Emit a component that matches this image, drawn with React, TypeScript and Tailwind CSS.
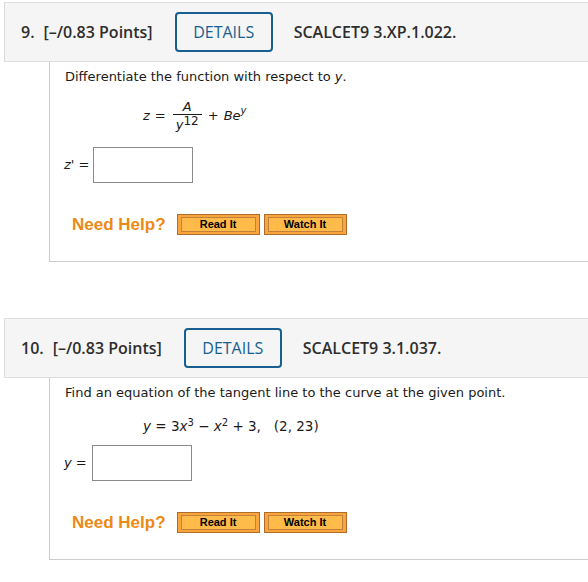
import React from "react";

const verdana = { fontFamily: '"DejaVu Sans", Verdana, sans-serif' };

function Header({ num, code, numGap }: { num: string; code: string; numGap: string }) {
  return (
    <div
      className="ml-[4px] h-[60px] box-border border border-r-0 border-[#dddddd] bg-[#f5f5f5] flex items-center pl-[16px] text-[16px] text-[#2e2e2e]"
      style={{ fontFamily: '"Open Sans", sans-serif' }}
    >
      <span className="font-semibold">{num}</span>
      <span className={`font-semibold ${numGap}`}>[–/0.83 Points]</span>
      <div className="ml-[22px] w-[98px] h-[40px] box-border border-2 border-[#175f91] rounded-[4px] flex items-center justify-center text-[#175f91] text-[16px]">
        DETAILS
      </div>
      <span className="ml-[21px] font-semibold">{code}</span>
    </div>
  );
}

function HelpRow({ mt }: { mt: string }) {
  const btn =
    "h-[21px] box-border border border-[#ad6c2a] bg-[#f9a43c] px-[3px] py-[2px] flex";
  const inner =
    "flex-1 box-border border border-[#c2803a] bg-[#ffbb4a] flex items-center justify-center text-[11px] font-bold text-black leading-none";
  return (
    <div className={`flex items-center ${mt} ml-[7px]`} style={{ fontFamily: '"Liberation Sans", Arial, sans-serif' }}>
      <span className="text-[17px] font-bold text-[#ec8a14] leading-[21px]">Need Help?</span>
      <div className={`${btn} ml-[11px] w-[83px]`}>
        <div className={inner}>Read It</div>
      </div>
      <div className={`${btn} ml-[4px] w-[83px]`}>
        <div className={inner}>Watch It</div>
      </div>
    </div>
  );
}

export default function App() {
  return (
    <div className="w-[588px] h-[582px] bg-white overflow-hidden pt-[2px] text-[#1a1a1a]">
      {/* Question 9 */}
      <Header num="9." code="SCALCET9 3.XP.1.022." numGap="ml-[9px]" />
      <div className="ml-[49px] h-[200px] box-border border-l border-b border-[#cccccc] pl-[15px] pt-[7px]" style={verdana}>
        <div className="text-[13px] leading-[16px]">
          Differentiate the function with respect to <i>y</i>.
        </div>
        <div className="mt-[14px] ml-[78px] flex items-center text-[13px]">
          <i>z</i>
          <span className="ml-[5px]">=</span>
          <div className="ml-[7px] flex flex-col items-center">
            <i className="leading-[15px] px-[2px]">A</i>
            <div className="w-[29px] h-px bg-[#1a1a1a]" />
            <div className="leading-[16px] pt-[2px] whitespace-nowrap">
              <i>y</i>
              <span className="text-[12px] relative top-[-4px] inline-block">12</span>
            </div>
          </div>
          <span className="ml-[6px]">+</span>
          <i className="ml-[5px]">Be</i>
          <i className="text-[10px] relative top-[-6px]">y</i>
        </div>
        <div className="mt-[14px] flex items-center text-[13px]">
          <span className="ml-[-1px]">
            <i>z</i>' =
          </span>
          <div className="ml-[4px] w-[100px] h-[36px] box-border border border-[#8a8a8a] bg-white" />
        </div>
        <HelpRow mt="mt-[31px]" />
      </div>

      <div className="h-[56px]" />

      {/* Question 10 */}
      <Header num="10." code="SCALCET9 3.1.037." numGap="ml-[9px]" />
      <div className="ml-[49px] h-[182px] box-border border-l border-b border-[#cccccc] pl-[15px] pt-[7px]" style={verdana}>
        <div className="text-[13px] leading-[16px]">
          Find an equation of the tangent line to the curve at the given point.
        </div>
        <div className="mt-[16px] ml-[78px] text-[13.5px] leading-[18px] whitespace-pre">
          <i>y</i> = 3<i>x</i>
          <sup className="text-[10px]">3</sup> − <i>x</i>
          <sup className="text-[10px]">2</sup> + 3,   (2, 23)
        </div>
        <div className="mt-[10px] flex items-center text-[13px]">
          <span className="ml-[-1px]">
            <i>y</i> =
          </span>
          <div className="ml-[5px] w-[100px] h-[36px] box-border border border-[#8a8a8a] bg-white" />
        </div>
        <HelpRow mt="mt-[31px]" />
      </div>
    </div>
  );
}
